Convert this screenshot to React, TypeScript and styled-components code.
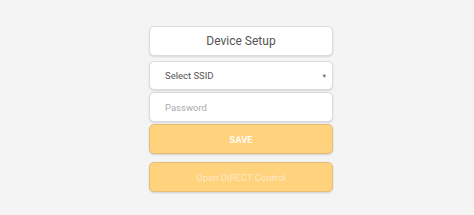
import React from "react";
import styled, { createGlobalStyle } from "styled-components";

const Global = createGlobalStyle`
  html, body { margin: 0; padding: 0; background: #f4f4f4; }
  body { font-family: Roboto, "Liberation Sans", Arial, sans-serif; }
  * { box-sizing: border-box; }
`;

const Page = styled.div`
  width: 474px;
  height: 215px;
  padding: 26px 0 0 149px;
  background: #f4f4f4;
`;

const Column = styled.div`
  width: 184px;
  display: flex;
  flex-direction: column;
`;

const Card = styled.div<{ $mt?: number; $h?: number }>`
  height: ${(p) => p.$h ?? 30}px;
  margin-top: ${(p) => p.$mt ?? 0}px;
  border: 1px solid #dcdcdc;
  border-radius: 5px;
  background: #fff;
  box-shadow: 0 1px 2px rgba(0, 0, 0, 0.12);
  display: flex;
  align-items: center;
`;

const Title = styled(Card)`
  justify-content: center;
  font-size: 12px;
  color: #555;
`;

const Select = styled(Card)`
  justify-content: space-between;
  padding: 0 5px 0 15px;
  font-size: 9.5px;
  color: #555;
`;

const Caret = styled.span`
  font-size: 5.5px;
  color: #666;
`;

const Input = styled(Card)`
  padding: 0 15px;
  font-size: 9.5px;
  color: #aaa;
  border-color: #d6d9e2;
`;

const OrangeButton = styled.div<{ $mt: number; $bold?: boolean }>`
  height: 30px;
  margin-top: ${(p) => p.$mt}px;
  border: 1px solid #e6bd72;
  border-radius: 5px;
  background: #ffd27d;
  box-shadow: 0 1px 2px rgba(0, 0, 0, 0.15);
  display: flex;
  align-items: center;
  justify-content: center;
  color: ${(p) => (p.$bold ? "#fffaf0" : "#fde9c4")};
  font-weight: ${(p) => (p.$bold ? 700 : 400)};
  font-size: 9.5px;
`;

export default function App() {
  return (
    <>
      <Global />
      <Page>
        <Column>
          <Title>Device Setup</Title>
          <Select $mt={5} $h={29}>
            <span>Select SSID</span>
            <Caret>▼</Caret>
          </Select>
          <Input $mt={2}>Password</Input>
          <OrangeButton $mt={2} $bold>SAVE</OrangeButton>
          <OrangeButton $mt={8}>Open DIRECT Control</OrangeButton>
        </Column>
      </Page>
    </>
  );
}
